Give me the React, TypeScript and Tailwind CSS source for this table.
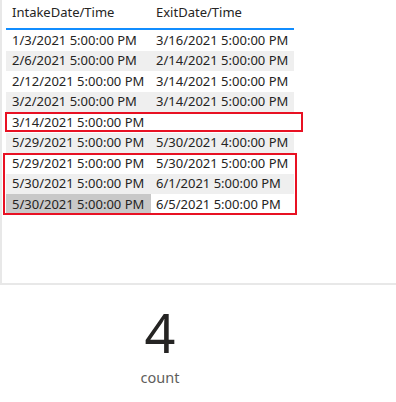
const rows: { intake: string; exit: string }[] = [
  { intake: '1/3/2021 5:00:00 PM', exit: '3/16/2021 5:00:00 PM' },
  { intake: '2/6/2021 5:00:00 PM', exit: '2/14/2021 5:00:00 PM' },
  { intake: '2/12/2021 5:00:00 PM', exit: '3/14/2021 5:00:00 PM' },
  { intake: '3/2/2021 5:00:00 PM', exit: '3/14/2021 5:00:00 PM' },
  { intake: '3/14/2021 5:00:00 PM', exit: '' },
  { intake: '5/29/2021 5:00:00 PM', exit: '5/30/2021 4:00:00 PM' },
  { intake: '5/29/2021 5:00:00 PM', exit: '5/30/2021 5:00:00 PM' },
  { intake: '5/30/2021 5:00:00 PM', exit: '6/1/2021 5:00:00 PM' },
  { intake: '5/30/2021 5:00:00 PM', exit: '6/5/2021 5:00:00 PM' },
];

export default function App() {
  return (
    <div
      className="w-[396px] h-[402px] bg-white overflow-hidden text-[#252423]"
      style={{ fontFamily: '"Noto Sans", "Open Sans", sans-serif' }}
    >
      {/* Table visual */}
      <div className="relative h-[285px] border-l-2 border-b-2 border-[#e8e8e8]">
        <div className="ml-[4px] w-[288px]">
          <div className="flex h-[30px] items-start pt-[3px] border-b-2 border-[#118dff] text-[13px] text-[#252423]">
            <div className="w-[145px] pl-[6px]">IntakeDate/Time</div>
            <div className="pl-[5px]">ExitDate/Time</div>
          </div>
          {rows.map((r, i) => (
            <div
              key={i}
              className={`flex h-[20.5px] items-center text-[13px] leading-none ${i % 2 === 1 ? 'bg-[#efefef]' : ''}`}
            >
              <div className={`w-[145px] h-full flex items-center pl-[6px] ${i === 8 ? 'bg-[#c8c8c8]' : ''}`}>
                {r.intake}
              </div>
              <div className="pl-[5px]">{r.exit}</div>
            </div>
          ))}
        </div>

        {/* highlight boxes */}
        <div className="absolute left-[3px] top-[112px] w-[298px] h-[20px] border-2 border-[#e81123]" />
        <div className="absolute left-[1px] top-[153px] w-[294px] h-[62px] border-2 border-[#e81123]" />
      </div>

      {/* Card visual */}
      <div className="w-[320px] flex flex-col items-center pt-[20px]">
        <div className="text-[54px] leading-[54px] font-normal text-[#252423]">4</div>
        <div className="mt-[8px] text-[14.5px] text-[#605e5c]">count</div>
      </div>
    </div>
  );
}
